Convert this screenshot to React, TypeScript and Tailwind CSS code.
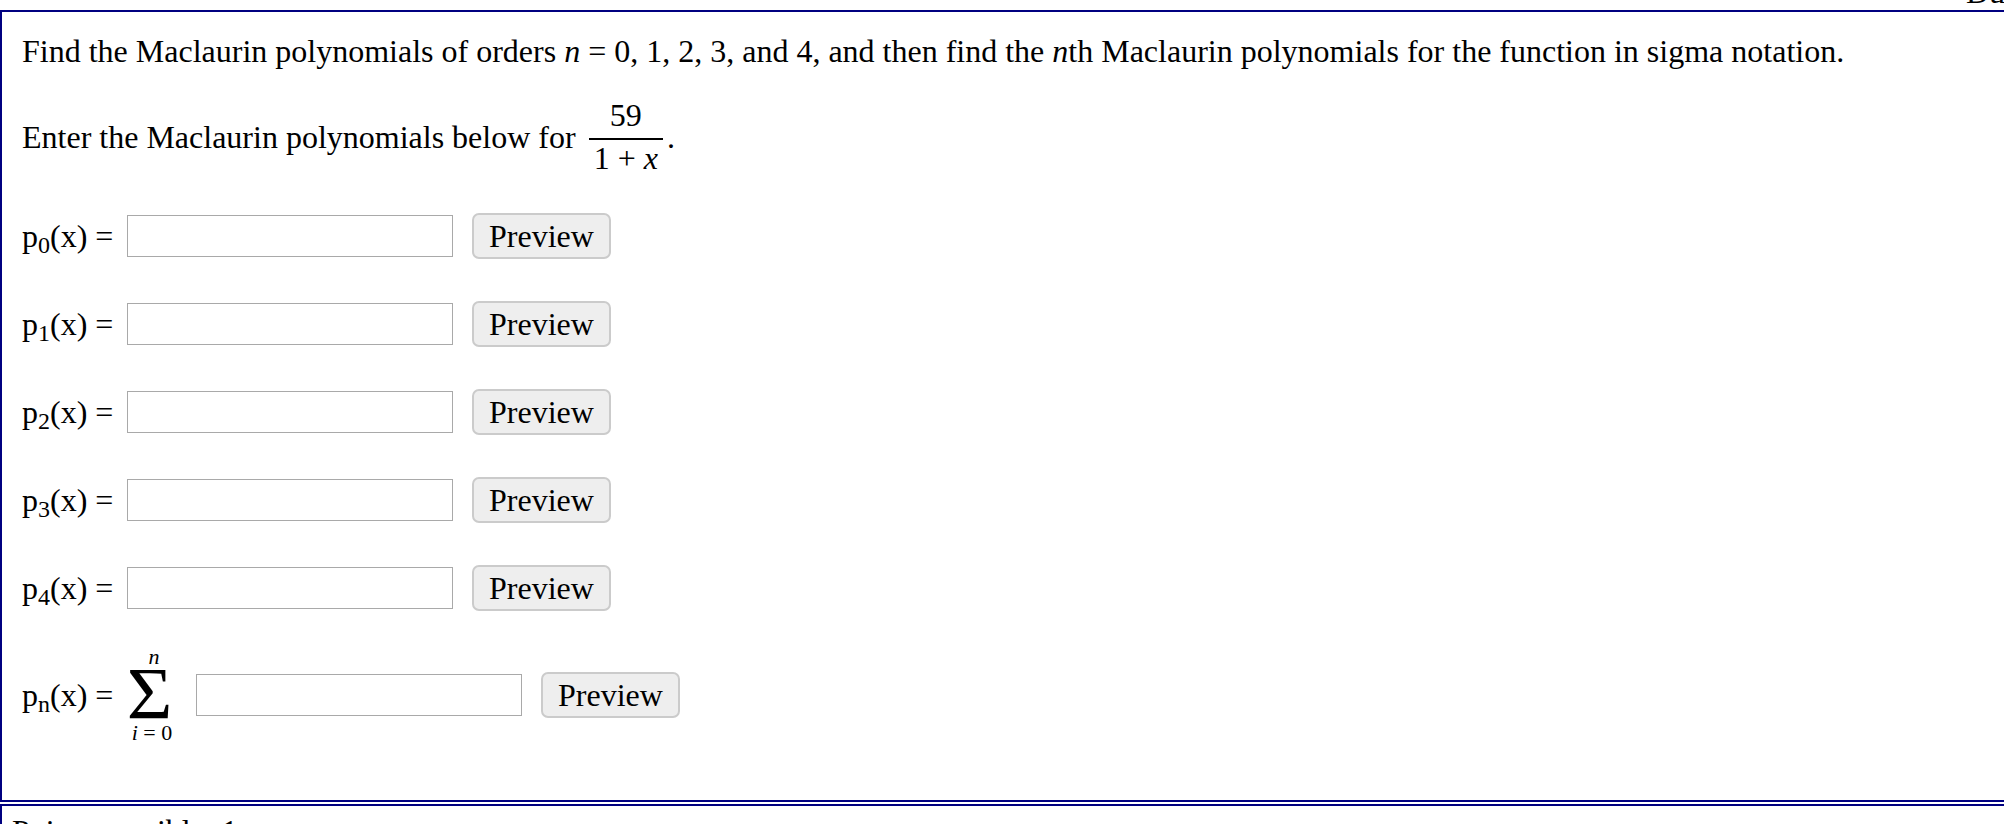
import React from 'react';

const orders = [0, 1, 2, 3, 4];

function AnswerBox() {
  return (
    <input
      type="text"
      className="w-[326px] h-[42px] border border-[#a9a9a9] bg-white px-2 text-[28px] outline-none"
    />
  );
}

function PreviewButton() {
  return (
    <button
      type="button"
      className="w-[139px] h-[46px] border-2 border-[#cbcbcb] rounded-[7px] bg-[#eeeeee] font-['Liberation_Serif',serif] text-[32px] leading-[36px] text-black"
    >
      Preview
    </button>
  );
}

function Fraction() {
  return (
    <span className="inline-flex flex-col items-stretch ml-[13px] font-['Liberation_Serif',serif] text-[32px] leading-[30px]">
      <span className="text-center">59</span>
      <span className="mt-[8px] h-[2px] bg-black"></span>
      <span className="mt-[3px] px-[5px] text-center whitespace-nowrap">
        1 + <span className="italic">x</span>
      </span>
    </span>
  );
}

function SigmaColumn() {
  return (
    <div className="flex flex-col items-center w-[48px] ml-[11px] font-['Liberation_Serif',serif]">
      <span className="text-[22px] leading-[22px] pl-[8px] italic">n</span>
      <span className="h-[54px] overflow-visible text-[74px] leading-[52px]">
        <span className="inline-block scale-x-[1.06]">Σ</span>
      </span>
      <span className="text-[22px] leading-[22px] pl-[4px] whitespace-nowrap">
        <span className="italic">i</span> = 0
      </span>
    </div>
  );
}

export default function App() {
  return (
    <div className="w-[2004px] h-[824px] overflow-hidden bg-white text-black font-['Liberation_Serif','Times_New_Roman',serif] text-[32px] leading-[36px]">
      {/* cut-off heading above the problem box */}
      <div className="h-[10px] overflow-hidden flex items-end pl-[1966px]">
        <span className="whitespace-nowrap">Due</span>
      </div>

      {/* Problem box */}
      <div className="border-t-2 border-l-2 border-b-2 border-[#000080] pt-[21px] pl-[20px] pb-[56px]">
        <div className="whitespace-nowrap">
          Find the Maclaurin polynomials of orders <span className="italic">n</span> = 0, 1, 2, 3, and 4, and then
          find the <span className="italic">n</span>th Maclaurin polynomials for the function in sigma notation.
        </div>

        <div className="flex items-center mt-[31px] whitespace-nowrap">
          <span>Enter the Maclaurin polynomials below for</span>
          <Fraction />
          <span className="ml-[4px]">.</span>
        </div>

        {orders.map((n) => (
          <div key={n} className={`flex items-center ${n === 0 ? 'mt-[40px]' : 'mt-[42px]'}`}>
            <span className="w-[93px] whitespace-nowrap">
              p<sub>{n}</sub>(x) =
            </span>
            <div className="ml-[12px] flex">
              <AnswerBox />
            </div>
            <div className="ml-[19px] flex">
              <PreviewButton />
            </div>
          </div>
        ))}

        <div className="flex items-center mt-[35px]">
          <span className="w-[93px] whitespace-nowrap">
            p<sub>n</sub>(x) =
          </span>
          <SigmaColumn />
          <div className="ml-[22px] flex">
            <AnswerBox />
          </div>
          <div className="ml-[19px] flex">
            <PreviewButton />
          </div>
        </div>
      </div>

      {/* Next box */}
      <div className="mt-[2px] border-t-2 border-l-2 border-[#000080] pt-[7px] pl-[10px]">
        <div className="whitespace-nowrap">Points possible: 1</div>
      </div>
    </div>
  );
}
